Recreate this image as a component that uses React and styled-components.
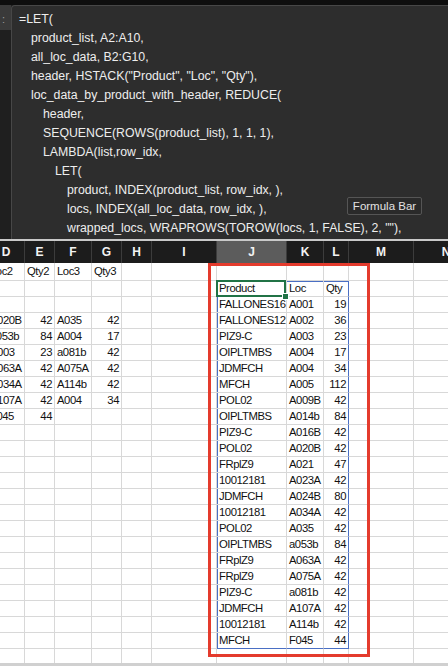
import React from 'react';
import styled, { createGlobalStyle, css } from 'styled-components';

const GlobalStyle = createGlobalStyle`
  html, body {
    margin: 0;
    padding: 0;
    background: #ffffff;
  }
  body {
    font-family: "Liberation Sans", Arial, sans-serif;
  }
`;

const columns = [
  { id: 'D', w: 37 },
  { id: 'E', w: 30 },
  { id: 'F', w: 37 },
  { id: 'G', w: 30 },
  { id: 'H', w: 30 },
  { id: 'I', w: 65 },
  { id: 'J', w: 70 },
  { id: 'K', w: 37 },
  { id: 'L', w: 25 },
  { id: 'M', w: 65 },
  { id: 'N', w: 65 },
];

const template = columns.map((c) => `${c.w}px`).join(' ');

const formula = [
  [0, '=LET('],
  [1, 'product_list, A2:A10,'],
  [1, 'all_loc_data, B2:G10,'],
  [1, 'header, HSTACK("Product", "Loc", "Qty"),'],
  [1, 'loc_data_by_product_with_header, REDUCE('],
  [2, 'header,'],
  [2, 'SEQUENCE(ROWS(product_list), 1, 1, 1),'],
  [2, 'LAMBDA(list,row_idx,'],
  [3, 'LET('],
  [4, 'product, INDEX(product_list, row_idx, ),'],
  [4, 'locs, INDEX(all_loc_data, row_idx, ),'],
  [4, 'wrapped_locs, WRAPROWS(TOROW(locs, 1, FALSE), 2, ""),'],
];

const leftData = {
  1: ['Loc2', 'Qty2', 'Loc3', 'Qty3'],
  4: ['A020B', 42, 'A035', 42],
  5: ['a053b', 84, 'A004', 17],
  6: ['A003', 23, 'a081b', 42],
  7: ['A063A', 42, 'A075A', 42],
  8: ['A034A', 42, 'A114b', 42],
  9: ['A107A', 42, 'A004', 34],
  10: ['F045', 44],
};

const tableRows = [
  ['Product', 'Loc', 'Qty'],
  ['FALLONES16', 'A001', 19],
  ['FALLONES12', 'A002', 36],
  ['PIZ9-C', 'A003', 23],
  ['OIPLTMBS', 'A004', 17],
  ['JDMFCH', 'A004', 34],
  ['MFCH', 'A005', 112],
  ['POL02', 'A009B', 42],
  ['OIPLTMBS', 'A014b', 84],
  ['PIZ9-C', 'A016B', 42],
  ['POL02', 'A020B', 42],
  ['FRplZ9', 'A021', 47],
  ['10012181', 'A023A', 42],
  ['JDMFCH', 'A024B', 80],
  ['10012181', 'A034A', 42],
  ['POL02', 'A035', 42],
  ['OIPLTMBS', 'a053b', 84],
  ['FRplZ9', 'A063A', 42],
  ['FRplZ9', 'A075A', 42],
  ['PIZ9-C', 'a081b', 42],
  ['JDMFCH', 'A107A', 42],
  ['10012181', 'A114b', 42],
  ['MFCH', 'F045', 44],
];

const TABLE_START = 2;
const TABLE_END = TABLE_START + tableRows.length - 1;
const ROW_COUNT = 25;

const Screen = styled.div`
  position: relative;
  width: 448px;
  height: 666px;
  overflow: hidden;
  background: #ffffff;
`;

const TopEdge = styled.div`
  height: 5px;
  background: #0e0e0e;
`;

const FormulaArea = styled.div`
  display: flex;
  height: 234px;
  background: #1f1f1f;
`;

const NameStub = styled.div`
  display: flex;
  flex-direction: column;
  width: 11px;

  span {
    display: block;
    height: 25px;
    padding-left: 2px;
    background: #3a3a3a;
    color: #9a9a9a;
    font-size: 11px;
    line-height: 28px;
  }
`;

const FormulaBox = styled.div`
  flex: 1;
  padding: 4px 0 0 7px;
  background: #2d2d2d;
  border-top: 1px solid #474747;
  border-left: 1px solid #474747;
  border-top-left-radius: 4px;
  overflow: hidden;
`;

const FormulaLine = styled.div`
  padding-left: ${({ $indent }) => $indent * 12}px;
  color: #ededed;
  font-size: 12.3px;
  line-height: 19px;
  white-space: nowrap;
`;

const Divider = styled.div`
  height: 2px;
  background: #c9c9c9;
`;

const HeaderRow = styled.div`
  display: grid;
  grid-template-columns: ${template};
  height: 22px;
  margin-left: -12px;
  background: #1c1c1c;
`;

const HeaderCell = styled.div`
  border-right: 1px solid #3c3c3c;
  background: ${({ $active }) => ($active ? '#5c5c5c' : 'transparent')};
  color: #f2f2f2;
  font-size: 12px;
  font-weight: 700;
  line-height: 22px;
  text-align: center;
`;

const Body = styled.div`
  height: 400px;
  overflow: hidden;
`;

const Row = styled.div`
  display: grid;
  grid-template-columns: ${template};
  height: ${({ $h }) => $h}px;
  margin-left: -12px;
`;

const Cell = styled.div`
  position: relative;
  box-sizing: border-box;
  padding: 0 2px 0 2px;
  border-right: 1px solid ${({ $blueRight }) => ($blueRight ? '#4a6fc4' : '#d8d8d8')};
  border-bottom: 1px solid ${({ $blueBottom }) => ($blueBottom ? '#4a6fc4' : '#d8d8d8')};
  box-shadow: ${({ $blueLeft, $blueTop }) =>
    [$blueLeft && 'inset 1px 0 0 #4a6fc4', $blueTop && 'inset 0 1px 0 #4a6fc4']
      .filter(Boolean)
      .join(', ') || 'none'};
  color: #111111;
  font-size: 11.3px;
  letter-spacing: -0.45px;
  line-height: ${({ $h }) => $h - 1}px;
  text-align: ${({ $num }) => ($num ? 'right' : 'left')};
  white-space: nowrap;

  ${({ $selected }) =>
    $selected &&
    css`
      &::after {
        content: '';
        position: absolute;
        inset: -1px 0 -1px -1px;
        border: 2px solid #217346;
      }
      &::before {
        content: '';
        position: absolute;
        right: -3px;
        bottom: -4px;
        z-index: 1;
        width: 5px;
        height: 5px;
        background: #217346;
        border: 1px solid #ffffff;
      }
    `}
`;

const BottomBar = styled.div`
  height: 3px;
  background: #d0d0d0;
`;

const Tooltip = styled.div`
  position: absolute;
  top: 197px;
  left: 347px;
  box-sizing: border-box;
  width: 75px;
  height: 18px;
  border: 1px solid #555555;
  border-radius: 2px;
  background: #2a2a2a;
  color: #e2e2e2;
  font-size: 11.5px;
  line-height: 16px;
  text-align: center;
`;

const Highlight = styled.div`
  position: absolute;
  top: 263px;
  left: 208px;
  box-sizing: border-box;
  width: 162px;
  height: 394px;
  border: 3px solid #e43b2d;
  pointer-events: none;
`;

const cellValue = (row, colIndex) => {
  if (colIndex <= 3) {
    const data = leftData[row];
    return data ? data[colIndex] : undefined;
  }
  if (colIndex >= 6 && colIndex <= 8 && row >= TABLE_START && row <= TABLE_END) {
    return tableRows[row - TABLE_START][colIndex - 6];
  }
  return undefined;
};

const App = () => {
  const rows = Array.from({ length: ROW_COUNT }, (_, i) => i + 1);

  return (
    <>
      <GlobalStyle />
      <Screen>
        <TopEdge />
        <FormulaArea>
          <NameStub>
            <span>:</span>
          </NameStub>
          <FormulaBox>
            {formula.map(([indent, text], i) => (
              <FormulaLine key={i} $indent={indent}>
                {text}
              </FormulaLine>
            ))}
          </FormulaBox>
        </FormulaArea>
        <Divider />
        <HeaderRow>
          {columns.map((c) => (
            <HeaderCell key={c.id} $active={c.id === 'J'}>
              {c.id}
            </HeaderCell>
          ))}
        </HeaderRow>
        <Body>
          {rows.map((r) => {
            const h = r === 1 ? 18 : 16;
            const inTable = r >= TABLE_START && r <= TABLE_END;
            return (
              <Row key={r} $h={h}>
                {columns.map((c, ci) => {
                  const v = cellValue(r, ci);
                  const tableCol = inTable && ci >= 6 && ci <= 8;
                  return (
                    <Cell
                      key={c.id}
                      $h={h}
                      $num={typeof v === 'number'}
                      $blueLeft={tableCol && ci === 6}
                      $blueRight={tableCol && ci === 8}
                      $blueTop={tableCol && r === TABLE_START}
                      $blueBottom={tableCol && r === TABLE_END}
                      $selected={r === TABLE_START && ci === 6}
                    >
                      {v}
                    </Cell>
                  );
                })}
              </Row>
            );
          })}
        </Body>
        <BottomBar />
        <Tooltip>Formula Bar</Tooltip>
        <Highlight />
      </Screen>
    </>
  );
};

export default App;
